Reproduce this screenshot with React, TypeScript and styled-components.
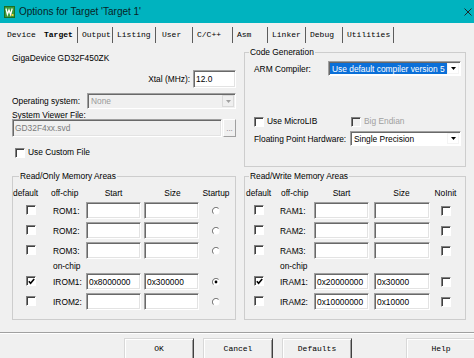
import React from 'react';
import styled, {createGlobalStyle} from 'styled-components';

const GlobalStyle = createGlobalStyle`
  html, body {
    margin: 0;
    padding: 0;
    background: #f0f0f0;
  }
  body {
    font-family: "Liberation Sans", Arial, sans-serif;
    font-size: 8.4px;
    color: #000;
  }
`

const Window = styled.div`
  width: 474px;
  height: 358px;
  overflow: hidden;
  background: #f0f0f0;
`
const TitleBar = styled.div`
  display: flex;
  align-items: center;
  height: 23px;
  padding-left: 4px;
  background: #00b3bf;
`
const TitleText = styled.span`
  margin-left: 4px;
  font-size: 10px;
  color: #082426;
`
const CloseIcon = styled.svg`
  margin-left: auto;
  margin-right: 2px;
`
const TabStrip = styled.div`
  display: flex;
  align-items: flex-end;
  height: 20px;
  padding-left: 3px;
`
const Tab = styled.div<{$w: number; $pl: number; $active?: boolean; $sep?: boolean}>`
  width: ${p => p.$w}px;
  height: 16px;
  box-sizing: border-box;
  padding-left: ${p => p.$pl}px;
  line-height: 16px;
  font-family: "Liberation Mono", monospace;
  font-size: 8px;
  font-weight: ${p => (p.$active ? 700 : 400)};
  white-space: nowrap;
  border-right: 1px solid ${p => (p.$sep ? '#5c5c5c' : 'transparent')};
`
const Panel = styled.div`
  display: grid;
  grid-template-columns: 224px 222px;
  grid-template-rows: 120px 149px;
  column-gap: 8px;
  row-gap: 8px;
  height: 290px;
  box-sizing: border-box;
  padding-left: 12px;
  border-bottom: 1px solid #a0a0a0;
`
const LeftCol = styled.div`
  display: flex;
  flex-direction: column;
`
const DeviceName = styled.div`
  margin-top: 9px;
  line-height: 12px;
`
const XtalRow = styled.div`
  display: flex;
  justify-content: flex-end;
  align-items: center;
  gap: 3px;
  margin-top: 6px;
`
const OsRow = styled.div`
  display: flex;
  justify-content: space-between;
  align-items: center;
  margin-top: 5px;
`
const SmallLabel = styled.div<{$mt?: number}>`
  margin-top: ${p => p.$mt ?? 0}px;
  line-height: 10px;
`
const SvfRow = styled.div`
  display: flex;
  gap: 1px;
  margin-top: -1px;
`
const Field = styled.div<{$w: number; $h: number; $disabled?: boolean}>`
  width: ${p => p.$w}px;
  height: ${p => p.$h}px;
  box-sizing: border-box;
  display: flex;
  align-items: center;
  padding-left: 2px;
  border: 1px solid;
  border-color: #a0a0a0 #ffffff #ffffff #a0a0a0;
  box-shadow: inset 1px 1px 0 #696969, inset -1px -1px 0 #e3e3e3;
  background: ${p => (p.$disabled ? '#f0f0f0' : '#fff')};
  color: ${p => (p.$disabled ? '#7a7a7a' : '#000')};
  white-space: nowrap;
  overflow: hidden;
`
const SmallButton = styled.div`
  width: 13px;
  height: 18px;
  box-sizing: border-box;
  display: flex;
  align-items: flex-end;
  justify-content: center;
  padding-bottom: 3px;
  border: 1px solid;
  border-color: #fff #a0a0a0 #a0a0a0 #fff;
  color: #7a7a7a;
  font-size: 8px;
  line-height: 8px;
`
const Combo = styled.div<{$w: number; $h: number; $disabled?: boolean}>`
  width: ${p => p.$w}px;
  height: ${p => p.$h}px;
  box-sizing: border-box;
  display: flex;
  padding: 1px;
  border: 1px solid;
  border-color: #a0a0a0 #ffffff #ffffff #a0a0a0;
  box-shadow: inset 1px 1px 0 #696969;
  background: ${p => (p.$disabled ? '#f0f0f0' : '#fff')};
`
const ComboValue = styled.div<{$selected?: boolean; $disabled?: boolean}>`
  flex: 1;
  display: flex;
  align-items: center;
  padding-left: 2px;
  white-space: nowrap;
  background: ${p => (p.$selected ? '#0a6fd8' : 'transparent')};
  color: ${p => (p.$selected ? '#fff' : p.$disabled ? '#9a9a9a' : '#000')};
`
const ComboArrow = styled.div<{$disabled?: boolean}>`
  width: 12px;
  display: flex;
  align-items: center;
  justify-content: center;
  box-sizing: border-box;
  border: 1px solid ${p => (p.$disabled ? '#dadada' : '#f4f4f4')};
  background: ${p => (p.$disabled ? '#efefef' : '#fff')};
`
const CheckRow = styled.div<{$mt?: number; $pl?: number; $w?: number}>`
  display: flex;
  align-items: center;
  gap: 3px;
  width: ${p => (p.$w ? `${p.$w}px` : 'auto')};
  margin-top: ${p => p.$mt ?? 0}px;
  padding-left: ${p => p.$pl ?? 0}px;
  line-height: 11px;
`
const Box = styled.span<{$disabled?: boolean; $ml?: number}>`
  display: inline-flex;
  align-items: center;
  justify-content: center;
  width: 10px;
  height: 10px;
  box-sizing: border-box;
  margin-left: ${p => p.$ml ?? 0}px;
  border: 1px solid;
  border-color: #808080 #ffffff #ffffff #808080;
  box-shadow: inset 1px 1px 0 #404040;
  background: ${p => (p.$disabled ? '#f0f0f0' : '#fff')};
`
const Dim = styled.span`
  color: #a0a0a0;
`
const Group = styled.fieldset<{$mt?: number}>`
  margin: ${p => p.$mt ?? 0}px 0 0;
  padding: 0;
  height: 100%;
  box-sizing: border-box;
  min-width: 0;
  border: 1px solid #cdcdcd;
`
const Legend = styled.legend<{$ml: number}>`
  margin-left: ${p => p.$ml}px;
  padding: 0 1px;
  line-height: 10px;
`
const CodeRow = styled.div<{$mt: number}>`
  display: flex;
  align-items: center;
  margin-top: ${p => p.$mt}px;
  padding-left: 9px;
`
const RowLabel = styled.div<{$w: number}>`
  width: ${p => p.$w}px;
  white-space: nowrap;
`
const CheckPair = styled.div`
  display: flex;
  margin-top: 40px;
  padding-left: 9px;
`
const MemGrid = styled.div<{$cols: string}>`
  display: grid;
  grid-template-columns: ${p => p.$cols};
  grid-template-rows: 12px 17px 17px 17px 8px 17px 17px;
  row-gap: 3px;
  align-items: center;
  margin-top: 6px;
  line-height: 10px;
`
const HeadCell = styled.div<{$align?: string; $pl?: number; $pr?: number}>`
  text-align: ${p => p.$align ?? 'left'};
  padding-left: ${p => p.$pl ?? 0}px;
  padding-right: ${p => p.$pr ?? 0}px;
  white-space: nowrap;
`
const RegionLabel = styled.div<{$pl: number}>`
  padding-left: ${p => p.$pl}px;
  white-space: nowrap;
`
const OnChip = styled.div<{$pl: number}>`
  grid-column: 2 / -1;
  padding-left: ${p => p.$pl}px;
  white-space: nowrap;
`
const SizeSlot = styled.div`
  display: flex;
  justify-content: flex-end;
`
const LastSlot = styled.div<{$pr: number}>`
  display: flex;
  justify-content: center;
  padding-right: ${p => p.$pr}px;
`
const ButtonRow = styled.div`
  display: flex;
  gap: 9px;
  padding: 4px 0 0 124px;
  border-top: 1px solid #fff;
`
const Btn = styled.div<{$ml?: number}>`
  width: 70px;
  height: 23px;
  flex: none;
  box-sizing: border-box;
  display: flex;
  align-items: center;
  justify-content: center;
  padding-bottom: 3px;
  margin-left: ${p => p.$ml ?? 0}px;
  font-family: "Liberation Mono", monospace;
  font-size: 8px;
  background: #f0f0f0;
  border: 1px solid;
  border-color: #d8d8d8 #404040 #404040 #d8d8d8;
  box-shadow: inset 1px 1px 0 #fff, inset -1px -1px 0 #a0a0a0;
`

const Tick = () => (
    <svg width="7" height="7" viewBox="0 0 7 7">
        <polyline points="0.8,3.2 2.6,5.2 6.2,1" fill="none" stroke="#000" strokeWidth="1.6"/>
    </svg>
);

const Check = ({on, disabled, ml}: {on?: boolean; disabled?: boolean; ml?: number}) => (
    <Box $disabled={disabled} $ml={ml}>{on && <Tick/>}</Box>
);

const Radio = ({on}: {on?: boolean}) => (
    <svg width="8" height="8" viewBox="0 0 8 8">
        <circle cx="4" cy="4" r="3.5" fill="#fff"/>
        <path d="M6.6 1.4 A3.5 3.5 0 0 0 1.4 6.6" fill="none" stroke="#6a6a6a" strokeWidth="1"/>
        {on && <circle cx="4" cy="4" r="1.4" fill="#000"/>}
    </svg>
);

const Arrow = ({disabled}: {disabled?: boolean}) => (
    <svg width="5" height="3" viewBox="0 0 5 3">
        <polygon points="0,0 5,0 2.5,3" fill={disabled ? '#a0a0a0' : '#000'}/>
    </svg>
);

const tabs = [
    {name: 'Device', w: 38, pl: 4},
    {name: 'Target', w: 37, pl: 3, active: true, sep: true},
    {name: 'Output', w: 35, pl: 4, sep: true},
    {name: 'Listing', w: 43, pl: 4, sep: true},
    {name: 'User', w: 37, pl: 6, sep: true},
    {name: 'C/C++', w: 40, pl: 4, sep: true},
    {name: 'Asm', w: 35, pl: 4, sep: true},
    {name: 'Linker', w: 38, pl: 4, sep: true},
    {name: 'Debug', w: 37, pl: 4, sep: true},
    {name: 'Utilities', w: 51, pl: 4, sep: true},
];

type MemRow = {name: string; start: string; size: string; def?: boolean; mark?: boolean};

type MemProps = {
    title: string;
    legendMl: number;
    cols: string;
    lastHead: string;
    defaultMl: number;
    headPl: number;
    labelPl: number;
    sizeW: number;
    lastPr: number;
    last: 'radio' | 'check';
    offChip: MemRow[];
    onChip: MemRow[];
};

const MemoryArea = (p: MemProps) => {
    const renderRow = (r: MemRow) => (
        <React.Fragment key={r.name}>
            <div><Check on={r.def} ml={p.defaultMl}/></div>
            <RegionLabel $pl={p.labelPl}>{r.name}:</RegionLabel>
            <Field $w={55} $h={17}>{r.start}</Field>
            <SizeSlot><Field $w={p.sizeW} $h={17}>{r.size}</Field></SizeSlot>
            <LastSlot $pr={p.lastPr}>
                {p.last === 'radio' ? <Radio on={r.mark}/> : <Check on={r.mark}/>}
            </LastSlot>
        </React.Fragment>
    );

    return (
        <Group>
            <Legend $ml={p.legendMl}>{p.title}</Legend>
            <MemGrid $cols={p.cols}>
                <HeadCell $pl={p.headPl}>default</HeadCell>
                <HeadCell $pl={1}>off-chip</HeadCell>
                <HeadCell $align="center">Start</HeadCell>
                <HeadCell $align="center" $pl={58 - p.sizeW + 2}>Size</HeadCell>
                <HeadCell $align="center" $pr={p.lastPr}>{p.lastHead}</HeadCell>
                {p.offChip.map(renderRow)}
                <OnChip $pl={p.labelPl}>on-chip</OnChip>
                {p.onChip.map(renderRow)}
            </MemGrid>
        </Group>
    );
};

const App = () => {
    return (
        <Window>
            <GlobalStyle/>
            <TitleBar>
                <svg width="11" height="12" viewBox="0 0 11 12">
                    <rect x="0" y="0" width="11" height="12" fill="#3a9a3c"/>
                    <rect x="0.5" y="0.5" width="10" height="11" fill="none" stroke="#1f6e22"/>
                    <polyline points="2,2.5 3.4,8.5 5,4 6.6,8.5 8.2,2.5" fill="none" stroke="#fff" strokeWidth="1.3"/>
                    <rect x="7.5" y="8" width="2" height="2" fill="#f2d33a"/>
                </svg>
                <TitleText>Options for Target 'Target 1'</TitleText>
                <CloseIcon width="8" height="8" viewBox="0 0 8 8">
                    <path d="M0.5 0.5 L7.5 7.5 M7.5 0.5 L0.5 7.5" stroke="#1a2a2c" strokeWidth="1"/>
                </CloseIcon>
            </TitleBar>

            <TabStrip>
                {tabs.map(t => (
                    <Tab key={t.name} $w={t.w} $pl={t.pl} $active={t.active} $sep={t.sep}>{t.name}</Tab>
                ))}
            </TabStrip>

            <Panel>
                <LeftCol>
                    <DeviceName>GigaDevice GD32F450ZK</DeviceName>
                    <XtalRow>
                        <span>Xtal (MHz):</span>
                        <Field $w={43} $h={18}>12.0</Field>
                    </XtalRow>
                    <OsRow>
                        <span>Operating system:</span>
                        <Combo $w={149} $h={16} $disabled>
                            <ComboValue $disabled>None</ComboValue>
                            <ComboArrow $disabled><Arrow disabled/></ComboArrow>
                        </Combo>
                    </OsRow>
                    <SmallLabel $mt={1}>System Viewer File:</SmallLabel>
                    <SvfRow>
                        <Field $w={210} $h={18} $disabled>GD32F4xx.svd</Field>
                        <SmallButton>...</SmallButton>
                    </SvfRow>
                    <CheckRow $mt={10} $pl={3}>
                        <Check/>
                        <span>Use Custom File</span>
                    </CheckRow>
                </LeftCol>

                <Group $mt={4}>
                    <Legend $ml={4}>Code Generation</Legend>
                    <CodeRow $mt={4}>
                        <RowLabel $w={74}>ARM Compiler:</RowLabel>
                        <Combo $w={133} $h={15}>
                            <ComboValue $selected>Use default compiler version 5</ComboValue>
                            <ComboArrow><Arrow/></ComboArrow>
                        </Combo>
                    </CodeRow>
                    <CheckPair>
                        <CheckRow $w={97}>
                            <Check/>
                            <span>Use MicroLIB</span>
                        </CheckRow>
                        <CheckRow>
                            <Check disabled/>
                            <Dim>Big Endian</Dim>
                        </CheckRow>
                    </CheckPair>
                    <CodeRow $mt={4}>
                        <RowLabel $w={96}>Floating Point Hardware:</RowLabel>
                        <Combo $w={111} $h={15}>
                            <ComboValue>Single Precision</ComboValue>
                            <ComboArrow><Arrow/></ComboArrow>
                        </Combo>
                    </CodeRow>
                </Group>

                <MemoryArea
                    title="Read/Only Memory Areas"
                    legendMl={6}
                    cols="37px 36px 55px 58px 1fr"
                    lastHead="Startup"
                    defaultMl={13}
                    headPl={0}
                    labelPl={3}
                    sizeW={55}
                    lastPr={2}
                    last="radio"
                    offChip={[
                        {name: 'ROM1', start: '', size: ''},
                        {name: 'ROM2', start: '', size: ''},
                        {name: 'ROM3', start: '', size: ''},
                    ]}
                    onChip={[
                        {name: 'IROM1', start: '0x8000000', size: '0x300000', def: true, mark: true},
                        {name: 'IROM2', start: '', size: ''},
                    ]}
                />

                <MemoryArea
                    title="Read/Write Memory Areas"
                    legendMl={4}
                    cols="35px 34px 55px 61px 1fr"
                    lastHead="NoInit"
                    defaultMl={9}
                    headPl={1}
                    labelPl={0}
                    sizeW={56}
                    lastPr={4}
                    last="check"
                    offChip={[
                        {name: 'RAM1', start: '', size: ''},
                        {name: 'RAM2', start: '', size: ''},
                        {name: 'RAM3', start: '', size: ''},
                    ]}
                    onChip={[
                        {name: 'IRAM1', start: '0x20000000', size: '0x30000', def: true},
                        {name: 'IRAM2', start: '0x10000000', size: '0x10000'},
                    ]}
                />
            </Panel>

            <ButtonRow>
                <Btn>OK</Btn>
                <Btn>Cancel</Btn>
                <Btn>Defaults</Btn>
                <Btn $ml={45}>Help</Btn>
            </ButtonRow>
        </Window>
    );
};

export default App;
